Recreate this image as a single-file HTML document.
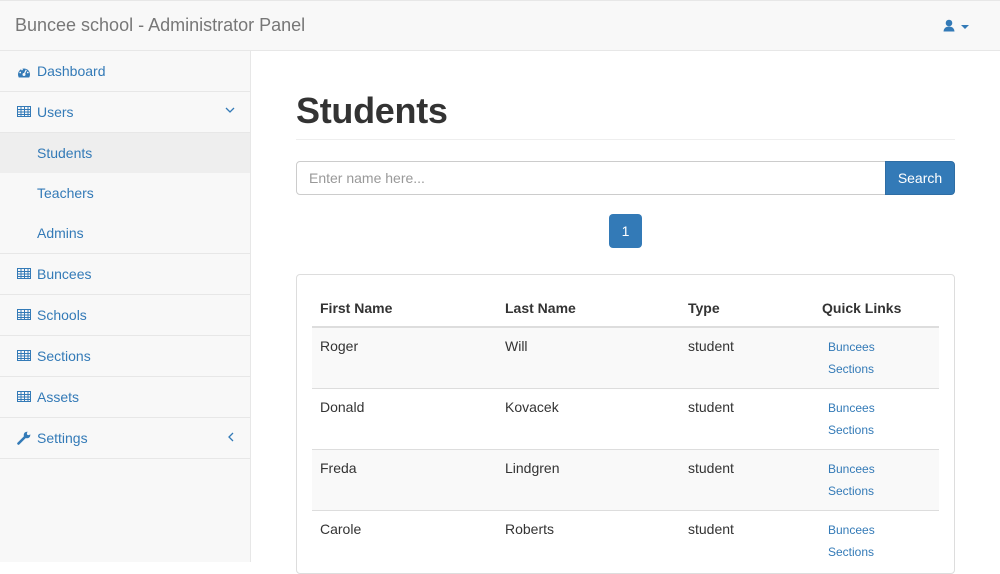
<!DOCTYPE html><html><head><style>
*{margin:0;padding:0;box-sizing:border-box}
body{width:1000px;height:562px;overflow:hidden;font-family:"Liberation Sans",Arial,sans-serif;font-size:14px;color:#333;background:#fff;position:relative}
.top{position:absolute;left:0;top:0;width:1000px;height:51px;background:#f8f8f8;border-top:1px solid #e7e7e7;border-bottom:1px solid #e7e7e7}
.brand{position:absolute;left:15px;top:14px;font-size:18px;color:#777}
.side{position:absolute;left:0;top:51px;width:251px;height:511px;background:#f8f8f8;border-right:1px solid #e7e7e7}
.it{height:41px;border-bottom:1px solid #e7e7e7;color:#337ab7;padding-left:37px;line-height:40px;position:relative}
.sub{height:40px;line-height:40px;padding-left:37px;color:#337ab7}
.ic{position:absolute;left:17px;top:14px}
.car{position:absolute;right:15px;top:14px}
h1{position:absolute;left:296px;top:90px;font-size:36px;font-weight:bold;color:#333;letter-spacing:-0.3px}
.hr{position:absolute;left:296px;top:139px;width:659px;border-top:1px solid #eee}
.inp{position:absolute;left:296px;top:161px;width:590px;height:34px;border:1px solid #ccc;border-radius:4px 0 0 4px;padding:8px 12px;color:#999}
.btn{position:absolute;left:885px;top:161px;width:70px;height:34px;background:#337ab7;border:1px solid #2e6da4;border-radius:0 4px 4px 0;color:#fff;text-align:center;line-height:32px}
.pg{position:absolute;left:609px;top:214px;width:33px;height:34px;background:#337ab7;border-radius:4px;color:#fff;text-align:center;line-height:34px}
.panel{position:absolute;left:296px;top:274px;width:659px;height:300px;border:1px solid #ddd;border-radius:4px}
table{position:absolute;left:15px;top:15px;width:627px;border-collapse:collapse}
th{text-align:left;font-weight:bold;height:37px;padding:0 8px;border-bottom:2px solid #ddd;vertical-align:middle}
td{height:61px;padding:8px;vertical-align:top;border-top:1px solid #ddd;line-height:20px}
tr.s td{background:#f9f9f9}
td a{color:#337ab7;font-size:12px;display:block;margin-left:6px;line-height:22px}
</style></head><body>
<div class="top"><div class="brand">Buncee school - Administrator Panel</div>
<svg style="position:absolute;left:943px;top:18px" width="28" height="14"><circle cx="6" cy="4" r="3.3" fill="#337ab7"/><path d="M0.5 12.5 Q1 7.5 6 7.5 Q11 7.5 11.5 12.5Z" fill="#337ab7"/><path d="M18 6h8l-4 4z" fill="#337ab7"/></svg></div>
<div class="side">
<div class="it"><svg class="ic" width="14" height="12" viewBox="0 0 14 12" style="top:15px"><path d="M1.8 11.5A6 6 0 1 1 12.2 11.5Z" fill="#337ab7"/><circle cx="7" cy="8.5" r="1.5" fill="#f8f8f8"/><path d="M7 8.5L9.3 3.8" stroke="#f8f8f8" stroke-width="1.2"/><circle cx="3.2" cy="6.5" r="0.9" fill="#f8f8f8"/><circle cx="5" cy="3.5" r="0.9" fill="#f8f8f8"/><circle cx="10.8" cy="6.5" r="0.9" fill="#f8f8f8"/></svg>Dashboard</div>
<div class="it"><svg class="ic" width="14" height="12"><rect x="0.5" y="0.5" width="13" height="10" fill="none" stroke="#337ab7"/><path d="M0 3.5h14M0 6h14M0 8.5h14M4 0v11M7.5 0v11M11 0v11" stroke="#337ab7" stroke-width="1"/></svg>Users<svg class="car" width="10" height="8"><path d="M1 2l4 4 4-4" fill="none" stroke="#337ab7" stroke-width="1.3"/></svg></div>
<div class="sub" style="background:#eee">Students</div>
<div class="sub">Teachers</div>
<div class="it" style="height:41px">Admins</div>
<div class="it"><svg class="ic" width="14" height="12"><rect x="0.5" y="0.5" width="13" height="10" fill="none" stroke="#337ab7"/><path d="M0 3.5h14M0 6h14M0 8.5h14M4 0v11M7.5 0v11M11 0v11" stroke="#337ab7"/></svg>Buncees</div>
<div class="it"><svg class="ic" width="14" height="12"><rect x="0.5" y="0.5" width="13" height="10" fill="none" stroke="#337ab7"/><path d="M0 3.5h14M0 6h14M0 8.5h14M4 0v11M7.5 0v11M11 0v11" stroke="#337ab7"/></svg>Schools</div>
<div class="it"><svg class="ic" width="14" height="12"><rect x="0.5" y="0.5" width="13" height="10" fill="none" stroke="#337ab7"/><path d="M0 3.5h14M0 6h14M0 8.5h14M4 0v11M7.5 0v11M11 0v11" stroke="#337ab7"/></svg>Sections</div>
<div class="it"><svg class="ic" width="14" height="12"><rect x="0.5" y="0.5" width="13" height="10" fill="none" stroke="#337ab7"/><path d="M0 3.5h14M0 6h14M0 8.5h14M4 0v11M7.5 0v11M11 0v11" stroke="#337ab7"/></svg>Assets</div>
<div class="it"><svg class="ic" width="14" height="14" style="top:13px"><path d="M1.5 12.5L8 6" stroke="#337ab7" stroke-width="2.6" stroke-linecap="round"/><circle cx="10" cy="4" r="3.3" fill="#337ab7"/><circle cx="11.5" cy="2.5" r="1.6" fill="#f8f8f8"/></svg>Settings<svg class="car" width="8" height="10"><path d="M6 1L2 5l4 4" fill="none" stroke="#337ab7" stroke-width="1.3"/></svg></div>
</div>
<h1>Students</h1><div class="hr"></div>
<div class="inp">Enter name here...</div><div class="btn">Search</div>
<div class="pg">1</div>
<div class="panel"><table>
<tr><th style="width:185px">First Name</th><th style="width:183px">Last Name</th><th style="width:134px">Type</th><th>Quick Links</th></tr>
<tr class="s"><td>Roger</td><td>Will</td><td>student</td><td><a>Buncees</a><a>Sections</a></td></tr>
<tr><td>Donald</td><td>Kovacek</td><td>student</td><td><a>Buncees</a><a>Sections</a></td></tr>
<tr class="s"><td>Freda</td><td>Lindgren</td><td>student</td><td><a>Buncees</a><a>Sections</a></td></tr>
<tr><td>Carole</td><td>Roberts</td><td>student</td><td><a>Buncees</a><a>Sections</a></td></tr>
</table></div>
</body></html>
